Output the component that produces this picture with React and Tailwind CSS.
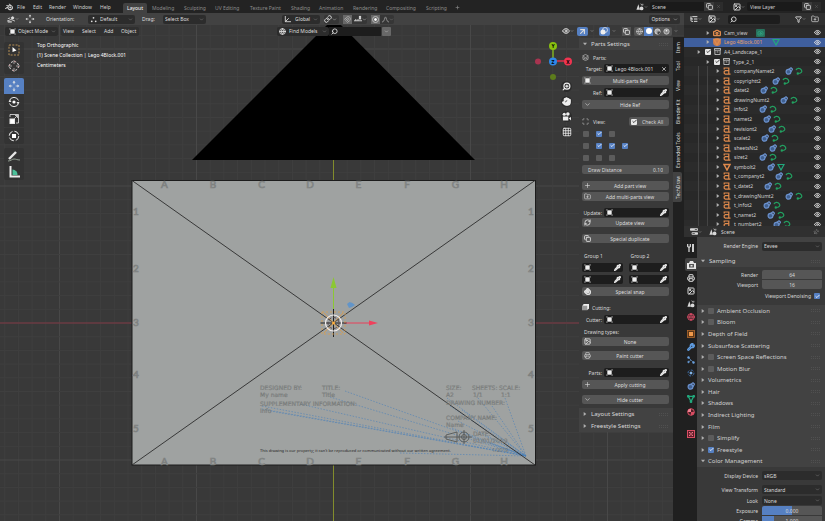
import {
  ArrowUpRight, Camera, Check, ChevronDown, Copy, Eye, Filter, FolderPlus, Globe,
  Grid3x3, Hand, Image, Layers, Link, ListTree, Magnet, Pin, Pipette, Plus, Printer, RefreshCw,
  Scan, Search, Wrench, X, ZoomIn,
} from 'lucide-react';
import { SiBlender } from 'react-icons/si';

const workspaces = [
  ['Modeling', 'w-8'], ['Sculpting', 'w-[31px]'], ['UV Editing', 'w-[35px]'], ['Texture Paint', 'w-[41px]'],
  ['Shading', 'w-7'], ['Animation', 'w-[34px]'], ['Rendering', 'w-[33px]'], ['Compositing', 'w-10'], ['Scripting', 'w-[29px]'],
];

const textObjects = [
  'companyNamet2', 'copyrightt2', 'datet2', 'drawingNumt2', 'infot2', 'namet2', 'revisiont2', 'scalet2',
  'sheetsNt2', 'sizet2', 'symbolt2', 't_companyt2', 't_datet2', 't_drawingNumt2', 't_infot2', 't_namet2', 't_numbert2',
];

const renderPanels = [
  { name: 'Ambient Occlusion', check: true },
  { name: 'Bloom', check: true },
  { name: 'Depth of Field' },
  { name: 'Subsurface Scattering' },
  { name: 'Screen Space Reflections', check: true },
  { name: 'Motion Blur', check: true },
  { name: 'Volumetrics' },
  { name: 'Hair' },
  { name: 'Shadows' },
  { name: 'Indirect Lighting' },
  { name: 'Film' },
  { name: 'Simplify', check: true },
  { name: 'Freestyle', check: true, on: true },
  { name: 'Color Management', open: true },
];

const Tri = ({ open }) => (
  <svg viewBox="0 0 6 6" className="w-1 h-1 shrink-0" fill="#b0b0b0">
    <path d={open ? 'M0 1h6L3 5z' : 'M1 0v6l4-3z'} />
  </svg>
);

const Grip = () => (
  <svg viewBox="0 0 10 3" className="w-[10px] h-[3px] ml-auto shrink-0" stroke="#505050" strokeWidth="1" strokeDasharray="1 1">
    <path d="M0 .5h10M0 2.5h10" />
  </svg>
);

const ObjectIcon = ({ className = '' }) => (
  <svg viewBox="0 0 8 8" className={`w-[7px] h-[7px] shrink-0 ${className}`}>
    <rect x="1.5" y="1.5" width="5" height="5" fill="#f0f0f0" />
    <path d="M.5 2V.5H2M6 .5h1.500V2M7.500 6v1.500H6M2 7.500H.5V6" fill="none" stroke="#999" strokeWidth=".7" />
  </svg>
);

const SceneIcon = ({ className = '' }) => (
  <svg viewBox="0 0 10 10" className={`w-2 h-2 shrink-0 ${className}`} fill="#d8d8d8">
    <path d="M3 1.500L.5 8.500H5z" />
    <circle cx="7" cy="6.800" r="2.300" />
    <path d="M6 .8l1.500 2.400M8.500 1v2" stroke="#d8d8d8" />
  </svg>
);

const EditorIcon = () => (
  <svg viewBox="0 0 10 8" className="w-2 h-[7px] shrink-0" fill="#d8d8d8">
    <rect width="10" height="3" rx="1" />
    <rect x="2" y="5" width="8" height="3" rx="1" />
    <rect x="6" y="1" width="3" height="1" fill="#444" />
    <rect x="3" y="6" width="3" height="1" fill="#444" />
  </svg>
);

const MoveIcon = ({ className = '' }) => (
  <svg viewBox="0 0 16 16" className={`shrink-0 ${className}`} fill="#e6e6e6" stroke="#e6e6e6">
    <path d="M8 .8l2 2.700H6zM8 15.200l2-2.700H6zM.8 8l2.700-2v4zM15.200 8l-2.700-2v4z" stroke="none" />
    <path d="M8 3v2.700M8 10.300V13M3 8h2.700M10.300 8H13" />
  </svg>
);

const Tick = ({ label, on, light }) => (
  <span className="grid shrink-0 place-items-center">
    <input
      type="checkbox" aria-label={label} defaultChecked={on}
      className={`peer [grid-area:1/1] appearance-none w-[6px] h-[6px] rounded-[1px] bg-[#5c5c5c] ${light ? 'checked:bg-[#e8e8e8]' : 'checked:bg-[#5680c2]'}`}
    />
    <Check className={`[grid-area:1/1] w-[5px] h-[5px] pointer-events-none invisible peer-checked:visible ${light ? 'text-[#222]' : 'text-white'}`} strokeWidth={4} />
  </span>
);

const Select = ({ label, value, className = '', icon }) => (
  <span className={`flex items-center h-[9px] rounded-[2px] bg-[#2c2c2c] px-[2px] ${className}`}>
    {icon}
    <select aria-label={label} className="appearance-none min-w-0 flex-1 bg-transparent outline-none">
      <option>{value}</option>
    </select>
    <ChevronDown className="w-[5px] h-[5px] shrink-0 text-[#999]" />
  </span>
);

const PanelButton = ({ icon, children, className = '' }) => (
  <button className={`grid grid-cols-[9px_1fr] items-center w-full h-[9px] rounded-[2px] bg-[#565656] px-[2px] text-[#dedede] ${className}`}>
    {icon ?? <span />}
    <span>{children}</span>
  </button>
);

const FieldBox = ({ label, value = '' }) => (
  <span className="flex flex-1 min-w-0 items-center gap-[2px] h-[9px] rounded-[2px] bg-[#1d1d1d] px-[2px]">
    <ObjectIcon />
    <input aria-label={label} defaultValue={value} className="flex-1 w-0 min-w-0 bg-transparent outline-none" />
    {value ? <X className="w-[6px] h-[6px] shrink-0" strokeWidth={3} /> : <Pipette className="w-[7px] h-[7px] shrink-0 text-[#e6e6e6]" strokeWidth={4} />}
  </span>
);

const ObjectField = ({ label, value, className = '' }) => (
  <label className={`flex items-center h-[9px] min-w-0 ${className}`}>
    <span className="w-[22px] shrink-0 pr-[2px] text-right">{label}</span>
    <FieldBox label={label} value={value} />
  </label>
);

function TopBar() {
  return (
    <header className="flex items-center h-[13px] shrink-0 bg-[#232323] text-[#d0d0d0]">
      <nav className="flex items-center pl-[5px]">
        <SiBlender className="w-2 h-2 mr-1" />
        <button className="w-4 text-left">File</button>
        <button className="w-4 text-left">Edit</button>
        <button className="w-6 text-left">Render</button>
        <button className="w-[27px] text-left">Window</button>
        <button className="w-[23px] text-left">Help</button>
      </nav>
      <nav className="flex items-center self-end h-[11px] text-[#8c8c8c]">
        <button className="w-6 h-[10px] mr-[5px] rounded-t-[2px] bg-[#424242] text-white">Layout</button>
        {workspaces.map(([name, width]) => (
          <button key={name} className={`${width} text-left whitespace-nowrap`}>{name}</button>
        ))}
        <button aria-label="Add workspace"><Plus className="w-[5px] h-[5px]" strokeWidth={3} /></button>
      </nav>
      <div className="flex items-center ml-auto pr-1">
        <SceneIcon />
        <ChevronDown className="w-1 h-1 mr-[2px]" />
        <input aria-label="Scene" defaultValue="Scene" className="w-[54px] h-[9px] rounded-l-[2px] bg-[#1a1a1a] px-[2px] outline-none" />
        <button aria-label="New scene" className="flex items-center justify-center w-[10px] h-[9px] bg-[#3a3a3a]"><Copy className="w-[7px] h-[7px]" strokeWidth={3} /></button>
        <button aria-label="Unlink scene" className="flex items-center justify-center w-[9px] h-[9px] bg-[#2c2c2c] text-[#666]"><X className="w-[5px] h-[5px]" /></button>
        <Image className="w-2 h-2 ml-[10px]" strokeWidth={3} />
        <ChevronDown className="w-1 h-1 mr-[2px]" />
        <input aria-label="View layer" defaultValue="View Layer" className="w-[55px] h-[9px] rounded-l-[2px] bg-[#1a1a1a] px-[3px] outline-none" />
        <button aria-label="New view layer" className="flex items-center justify-center w-[10px] h-[9px] bg-[#3a3a3a]"><Copy className="w-[7px] h-[7px]" strokeWidth={3} /></button>
        <button aria-label="Remove view layer" className="flex items-center justify-center w-[9px] h-[9px] bg-[#2c2c2c] text-[#666]"><X className="w-[5px] h-[5px]" /></button>
      </div>
    </header>
  );
}

function ToolSettings() {
  return (
    <div className="grid grid-cols-[1fr_auto_1fr] items-center h-3 shrink-0 bg-[#424242]">
      <div className="flex items-center pl-[7px] whitespace-nowrap">
        <svg viewBox="0 0 10 8" className="w-2 h-[7px]" fill="none" stroke="#ddd"><path d="M0 6l5-2 5 2M1 3l3-1" /><circle cx="7" cy="2" r="1.500" fill="#ddd" /><path d="M1 7h5" strokeWidth="1.500" /></svg>
        <ChevronDown className="w-1 h-1 mr-[6px]" />
        <MoveIcon className="w-[10px] h-[10px] mr-[11px]" />
        <span className="w-[42px]">Orientation:</span>
        <Select label="Orientation" value="Default" className="w-[47px] mr-[7px]" icon={<svg viewBox="0 0 8 8" className="w-[7px] h-[7px] mr-[3px]" fill="#ddd"><circle cx="2" cy="6" r="1" /><circle cx="4" cy="2" r="1" /><circle cx="6.500" cy="6" r="1" /></svg>} />
        <span className="w-[21px]">Drag:</span>
        <Select label="Drag" value="Select Box" className="w-[43px]" />
      </div>
      <div className="flex items-center gap-1 pl-1 mr-3">
        <Select
          label="Transform orientation" value="Global" className="w-[38px]"
          icon={<svg viewBox="0 0 8 8" className="w-[7px] h-[7px] mr-1" fill="none" stroke="#ddd"><path d="M1.500 0v6.500H8M1.500 6.500l4-4" /></svg>}
        />
        <span className="flex items-center w-[15px] h-[9px] rounded-[2px] bg-[#363636]"><Link className="w-2 h-2" strokeWidth={3} /><ChevronDown className="w-[5px] h-[5px]" /></span>
        <span className="flex items-center h-[9px] rounded-[2px] bg-[#363636]">
          <Magnet className="w-[9px] h-[9px] p-[1px] bg-[#686868] text-[#aaa]" strokeWidth={3} />
          <svg viewBox="0 0 9 8" className="w-2 h-2 ml-[2px]" stroke="#ddd" fill="#ddd"><path d="M0 6h9M2 4v2M4.500 4v2" /><rect x="6" y="1" width="1.500" height="3" /></svg>
          <ChevronDown className="w-[5px] h-[5px]" />
        </span>
        <span className="flex items-center h-[9px] rounded-[2px] bg-[#363636]">
          <svg viewBox="0 0 9 9" className="w-[9px] h-[9px] bg-[#686868]" fill="none" stroke="#bbb"><circle cx="4.500" cy="4.500" r="3" /><circle cx="4.500" cy="4.500" r="1" fill="#fff" stroke="#fff" /></svg>
          <svg viewBox="0 0 8 8" className="w-[7px] h-[7px] ml-[2px]" stroke="#999" fill="none"><path d="M0 7C3 7 3 1 4 1s1 6 4 6" /></svg>
          <ChevronDown className="w-[5px] h-[5px] text-[#888]" />
        </span>
      </div>
      <button className="flex items-center justify-self-end gap-[3px] h-[9px] mr-1 rounded-[2px] bg-[#303030] px-[2px]">
        Options <ChevronDown className="w-[5px] h-[5px]" />
      </button>
    </div>
  );
}

function ViewportHeader() {
  return (
    <div className="grid grid-cols-[1fr_auto_1fr] items-center h-3 shrink-0">
      <div className="flex items-center pl-[5px]">
        <Select label="Mode" value="Object Mode" className="w-[53px] mr-[3px]" icon={<ObjectIcon className="mx-[2px]" />} />
        <nav className="flex items-center h-[9px] rounded-[2px] bg-[#303030] px-[2px]">
          <button className="w-[19px] text-left">View</button>
          <button className="w-[22px] text-left">Select</button>
          <button className="w-[17px] text-left">Add</button>
          <button className="w-4 text-left">Object</button>
        </nav>
      </div>
      <div className="flex items-center mr-4">
        <Select label="Asset type" value="Find Models" className="w-[52px]" icon={<Globe className="w-[7px] h-[7px] mr-[3px]" strokeWidth={3} />} />
        <label className="flex items-center w-[52px] h-[9px] bg-[#1d1d1d] pl-[2px]">
          <Search className="w-[7px] h-[7px] shrink-0 -scale-x-100" strokeWidth={3} />
          <input aria-label="Search models" className="w-full min-w-0 bg-transparent outline-none" />
        </label>
        <button aria-label="Search options" className="flex items-center justify-center w-[9px] h-[9px] ml-[1px] rounded-[1px] bg-[#686868]"><ChevronDown className="w-[5px] h-[5px]" /></button>
      </div>
      <div className="flex items-center justify-end pr-[6px]">
        <Eye className="w-2 h-2" strokeWidth={3} /><ChevronDown className="w-1 h-1 mr-[3px]" />
        <button aria-label="Gizmos" className="w-[11px] h-[9px] rounded-[2px] bg-[#5680c2] px-[1px]"><ArrowUpRight className="w-[9px] h-[9px]" strokeWidth={3} /></button>
        <ChevronDown className="w-1 h-1 ml-[2px] mr-[5px]" />
        <button aria-label="Overlays" className="w-[11px] h-[9px] rounded-[2px] bg-[#5680c2] px-[1px]"><svg viewBox="0 0 8 8" className="w-2 h-2" fill="#eee"><circle cx="3" cy="5" r="2.500" /><circle cx="5" cy="3" r="2.500" fill="none" stroke="#eee" strokeWidth=".7" /></svg></button>
        <ChevronDown className="w-1 h-1 ml-[2px] mr-[6px]" />
        <Copy className="w-[9px] h-[9px] mr-[3px] p-[1px] bg-[#545454]" strokeWidth={3} />
        <div className="flex items-center h-[9px] rounded-[2px] bg-[#545454] px-[1px]">
          <button aria-label="Wireframe" className="flex justify-center w-[9px]"><Globe className="w-[7px] h-[7px]" /></button>
          <button aria-label="Solid" className="flex items-center justify-center w-[9px] h-[9px] bg-[#5680c2]"><span className="block w-[6px] h-[6px] rounded-full bg-white" /></button>
          <button aria-label="Material preview" className="flex justify-center w-[9px]"><svg viewBox="0 0 8 8" className="w-[7px] h-[7px]"><circle cx="4" cy="4" r="3" fill="#aaa" stroke="#ddd" /><path d="M4 4h3a3 3 0 0 1-3 3z" fill="#444" /></svg></button>
          <button aria-label="Rendered" className="flex justify-center w-[9px]"><svg viewBox="0 0 8 8" className="w-[7px] h-[7px]"><circle cx="4" cy="4" r="3" fill="#888" stroke="#ccc" /><circle cx="4" cy="3" r="1" fill="#eee" /></svg></button>
        </div>
        <ChevronDown className="w-1 h-1 ml-[2px]" />
      </div>
    </div>
  );
}

const gridSteps = Array.from({ length: 61 }, (_, i) => i - 30);
const linkEnds = [
  [270, 411], [262, 406], [300, 404], [330, 397], [345, 391], [447, 398], [450, 406], [462, 410],
  [478, 398], [492, 406], [505, 398], [458, 421], [452, 428], [470, 437], [485, 436], [490, 443], [400, 453], [262, 409],
];
const titleBlock = [
  [260, 390, 'DESIGNED BY:'], [322, 390, 'TITLE:'], [260, 397, 'My name'], [322, 397, 'Title'],
  [260, 406, 'SUPPLEMENTARY INFORMATION:'], [260, 413, 'Info'],
  [446, 390, 'SIZE:'], [472, 390, 'SHEETS:'], [499, 390, 'SCALE:'], [446, 397, 'A2'], [473, 397, '1/1'], [501, 397, '1:1'],
  [446, 405, 'DRAWING NUMBER:'], [446, 420, 'COMPANY NAME:'], [446, 427, 'Name'], [473, 436, 'DATE:'], [473, 443, '01/01/2019'],
];
const rowNumbers = [[1, 215], [2, 272], [3, 326], [4, 378], [5, 432]];

function SceneCanvas() {
  return (
    <svg viewBox="0 25 684 496" preserveAspectRatio="xMidYMid slice" className="absolute inset-0 w-full h-full" fontFamily="Noto Sans, sans-serif">
      <rect y="25" width="684" height="496" fill="#393939" />
      {gridSteps.map((i) => (
        <g key={i} stroke={i % 10 === 0 ? '#484848' : '#3f3f3f'} strokeWidth="1">
          <path d={`M${333.5 + i * 13.7} 25V521`} />
          <path d={`M0 ${323 + i * 13.7}H684`} />
        </g>
      ))}
      <path d="M0 323H684" stroke="#7c3540" />
      <rect x="333" y="25" width="1" height="496" fill="#828c2c" />
      <path d="M192 160L334 18L475 160z" fill="#000" />
      <rect x="132" y="180.500" width="403.500" height="284.500" fill="#9fa2a1" stroke="#1c1c1c" />
      <g fontSize="10" fontFamily="Lato, sans-serif" fill="#959897" stroke="#7e8180" strokeWidth=".7" textAnchor="middle">
        {['A', 'B', 'C', 'D', 'E', 'F', 'G', 'H'].map((c, i) => (
          <g key={c}>
            <text x={164.500 + i * 48.500} y="188">{c}</text>
            <text x={164.500 + i * 48.500} y="465">{c}</text>
          </g>
        ))}
        {rowNumbers.map(([n, y]) => (
          <g key={n}>
            <text x="136" y={y}>{n}</text>
            <text x="531" y={y}>{n}</text>
          </g>
        ))}
      </g>
      <g stroke="#4a7fb8" strokeWidth=".6" strokeDasharray="1.500 1.500">
        {linkEnds.map(([x, y]) => <path key={`${x}-${y}`} d={`M${x} ${y}L526 456`} />)}
      </g>
      <path d="M132 180.500L535 465M535 180.500L132 465" stroke="#2c2c2c" strokeWidth=".9" />
      <g fontSize="6" fontFamily="DejaVu Sans, sans-serif" fill="#858887" stroke="#707372" strokeWidth=".2">
        {titleBlock.map(([x, y, t]) => <text key={t} x={x} y={y}>{t}</text>)}
      </g>
      <text x="260" y="452" fontSize="4" fill="#1f1f1f">This drawing is our property; it can't be reproduced or communicated without our written agreement.</text>
      <text x="492" y="452" fontSize="5" fill="#6f7574">1/2019</text>
      <g fill="none" stroke="#555857" strokeWidth=".9">
        <path d="M446 435l11-3v10l-11-3zM444 437h28M464 430v14" />
        <circle cx="464" cy="437" r="5" />
        <circle cx="464" cy="437" r="2.500" />
      </g>
      <g fill="none">
        <rect x="333" y="288" width="1" height="24" fill="#8bc832" />
        <path d="M333.500 277l3 11h-6z" fill="#8bc832" />
        <path d="M344 323h26" stroke="#e8405a" />
        <path d="M378 323l-9 -2.500v5z" fill="#f0405c" />
        <path d="M347 304l2.500-2 3 1 2.500 2-3 2-3 1z" fill="#4a90d8" opacity=".7" />
        <path d="M324 313l19 20M343 313l-19 20" stroke="#e09a40" strokeWidth=".8" />
        <path d="M320.500 323h26M333.500 309v28" stroke="#222" />
        <rect x="322" y="312" width="23" height="22" stroke="#dca04c" strokeWidth=".8" strokeDasharray="2 2" />
        <circle cx="333.500" cy="323" r="8" stroke="#f4eeee" strokeWidth="1.200" />
        <circle cx="333.500" cy="323" r="5.500" stroke="#5a4a50" strokeDasharray="3 2" />
        <circle cx="333.500" cy="323" r="1.500" fill="#ffb040" />
      </g>
    </svg>
  );
}

const toolButton = 'flex items-center justify-center w-5 h-4 bg-[#303030]/70';

function Toolbar() {
  return (
    <div className="flex flex-col w-6 shrink-0 pl-1 pt-[5px]">
      <button aria-label="Tweak" className={`${toolButton} rounded-t-[2px]`}>
        <svg viewBox="0 0 12 12" className="w-3 h-3"><rect x="1" y="1" width="10" height="10" fill="none" stroke="#d8a860" strokeDasharray="2 1.300" strokeWidth=".8" /><path d="M4.500 3l4 3.500-4 1.500z" fill="#fff" /></svg>
      </button>
      <button aria-label="Cursor" className={`${toolButton} rounded-b-[2px]`}>
        <svg viewBox="0 0 12 12" className="w-3 h-3" fill="none"><circle cx="6" cy="6" r="4.500" stroke="#e8e8e8" strokeDasharray="2 1.500" /><circle cx="6" cy="6" r="4.500" stroke="#c05050" strokeDasharray="1 6" /><path d="M6 0v4M6 8v4M0 6h4M8 6h4" stroke="#ccc" strokeWidth=".7" /></svg>
      </button>
      <button aria-label="Move" className="flex items-center justify-center w-5 h-4 mt-1 rounded-t-[2px] bg-[#5680c2]"><MoveIcon className="w-3 h-3" /></button>
      <button aria-label="Rotate" className={toolButton}>
        <svg viewBox="0 0 12 12" className="w-3 h-3" fill="none" stroke="#e6e6e6"><path d="M1.500 4.500a4.800 4.800 0 0 1 9 0M10.500 7.500a4.800 4.800 0 0 1-9 0" /><path d="M.5 6l1.500-2.500L3.500 6zM11.500 6L10 8.500 8.500 6z" fill="#e6e6e6" stroke="none" /><circle cx="6" cy="6" r="1.600" fill="#fff" stroke="none" /></svg>
      </button>
      <button aria-label="Scale" className={`${toolButton} mt-[1px]`}>
        <svg viewBox="0 0 12 12" className="w-3 h-3" fill="none" stroke="#e6e6e6"><rect x="2" y="6" width="4.500" height="4.500" fill="#fff" /><path d="M2 4V1.500h8.500V10H8M6.500 5.500l3-3M7 2.500h2.500V5" strokeWidth=".8" /></svg>
      </button>
      <button aria-label="Transform" className={`${toolButton} mt-[1px] rounded-b-[2px]`}>
        <svg viewBox="0 0 12 12" className="w-3 h-3" fill="none" stroke="#e6e6e6"><circle cx="6" cy="6" r="4.800" strokeDasharray="5.500 2" /><rect x="4" y="4" width="4" height="4" fill="#fff" stroke="none" /></svg>
      </button>
      <button aria-label="Annotate" className={`${toolButton} mt-1 rounded-t-[2px]`}>
        <svg viewBox="0 0 14 12" className="w-[14px] h-3" fill="none" stroke="#e6e6e6"><path d="M2 9L9 2" strokeWidth="2.400" /><path d="M1 11c3 0 4-2 6-2s3 1 6 1" stroke="#a8b8a8" strokeWidth=".8" /></svg>
      </button>
      <button aria-label="Measure" className={`${toolButton} rounded-b-[2px]`}>
        <svg viewBox="0 0 12 12" className="w-3 h-3"><path d="M2.500 0v10.500H12" fill="none" stroke="#eee" strokeWidth="2" /><path d="M4.500 3.500a5 5 0 0 1 5 5.500h-5z" fill="#4cc09a" /></svg>
      </button>
    </div>
  );
}

function NavGizmo() {
  const round = 'flex items-center justify-center w-[11px] h-[11px] rounded-full bg-[#2c2c2c] text-[#eee]';
  return (
    <div className="flex flex-col items-end w-10 shrink-0 mr-[6px] pt-1">
      <svg viewBox="0 0 40 40" className="w-10 h-10" fontSize="5" fontWeight="700" textAnchor="middle">
        <path d="M20 20V6" stroke="#80b020" strokeWidth="1.500" />
        <path d="M20 20h14" stroke="#e0304c" strokeWidth="1.500" />
        <circle cx="5" cy="20.500" r="3" fill="#a83450" />
        <circle cx="20" cy="36" r="3" fill="#5d7c1c" />
        <circle cx="20" cy="5" r="4" fill="#8ac010" />
        <circle cx="20" cy="20.500" r="4" fill="#2e88e8" />
        <circle cx="35" cy="20.500" r="4" fill="#f03450" />
        <text x="20" y="7">Y</text><text x="20" y="22.500">Z</text><text x="35" y="22.500">X</text>
      </svg>
      <div className="flex flex-col gap-1 pr-[1px]">
        <button aria-label="Zoom" className={round}><ZoomIn className="w-[9px] h-[9px] -scale-x-100" strokeWidth={3} /></button>
        <button aria-label="Pan" className={round}><Hand className="w-[9px] h-[9px]" fill="#eee" strokeWidth={3} /></button>
        <button aria-label="Camera view" className={round}>
          <svg viewBox="0 0 10 10" className="w-[9px] h-[9px]" fill="#eee"><circle cx="2.500" cy="2.500" r="1.800" /><circle cx="6.500" cy="2.300" r="2" /><path d="M1 5h6v4.500H1zM7.500 7L10 5.500v4z" /></svg>
        </button>
        <button aria-label="Perspective" className={round}><Grid3x3 className="w-[10px] h-[10px]" strokeWidth={2} /></button>
      </div>
    </div>
  );
}

const viewChecks = [
  [false, true, false],
  [false, true, true, true],
  [false, false, false],
];
const glyph = 'w-[7px] h-[7px] shrink-0';

function PartsPanel() {
  return (
    <aside className="w-[94px] shrink-0 pt-[1px] text-[#d8d8d8]">
      <section className="bg-[#393939]">
        <h2 className="flex items-center gap-1 h-3 bg-[#424242] px-1">
          <Tri open /><span className="text-[6px]">Parts Settings</span><Grip />
        </h2>
        <div className="flex flex-col pl-[3px] pr-1 pt-[3px] pb-1">
          <p className="flex items-center gap-1 h-[9px] mb-[2px]"><Layers className={glyph} />Parts:</p>
          <div className="flex flex-col gap-[3px]">
            <ObjectField label="Target:" value="Lego 4Block.001" />
            <PanelButton icon={<ObjectIcon />}>Multi-parts Ref</PanelButton>
            <ObjectField label="Ref:" />
            <PanelButton icon={<ChevronDown className={glyph} />}>Hide Ref</PanelButton>
          </div>
          <div className="flex flex-col gap-[3px] mt-2">
            <div className="flex items-center justify-between h-[9px]">
              <span className="flex items-center gap-1"><Scan className={glyph} />View:</span>
              <label className="flex items-center gap-[5px] w-10 h-[9px] rounded-[2px] bg-[#565656] pl-[2px]"><Tick label="Check All" on light />Check All</label>
            </div>
            {viewChecks.map((row, r) => (
              <div key={r} className="flex items-center gap-[7px] h-[9px] pl-[1px]">
                {row.map((on, c) => <Tick key={c} label={`View ${r + 1}-${c + 1}`} on={on} />)}
              </div>
            ))}
            <label className="flex items-center h-[9px] rounded-[2px] bg-[#565656] px-[6px]">
              Draw Distance
              <input defaultValue="0.10" className="flex-1 w-0 bg-transparent text-right outline-none" />
            </label>
          </div>
          <PanelButton className="mt-[7px] mb-[2px]" icon={<Plus className={glyph} />}>Add part view</PanelButton>
          <PanelButton icon={<FolderPlus className={glyph} />}>Add multi-parts view</PanelButton>
          <ObjectField className="mt-[7px] mb-[1px]" label="Update:" />
          <PanelButton icon={<RefreshCw className={glyph} strokeWidth={3} />}>Update view</PanelButton>
          <PanelButton className="mt-[7px]" icon={<Copy className={glyph} strokeWidth={3} />}>Special duplicate</PanelButton>
          <div className="grid grid-cols-2 gap-x-[6px] gap-y-[3px] mt-2 mb-[3px]">
            <span className="flex items-center h-[9px] pl-[2px]">Group 1</span>
            <span className="flex items-center h-[9px] pl-[2px]">Group 2</span>
            <FieldBox label="Group 1 first" />
            <FieldBox label="Group 2 first" />
            <FieldBox label="Group 1 second" />
            <FieldBox label="Group 2 second" />
          </div>
          <PanelButton icon={<Magnet className={`${glyph} rotate-90`} strokeWidth={5} />}>Special snap</PanelButton>
          <div className="flex flex-col gap-[3px] mt-[7px]">
            <p className="flex items-center gap-[3px] h-[9px]">
              <svg viewBox="0 0 8 8" className={glyph}><path d="M0 2l2-2h6v5L6 7H0z" fill="#999" /><path d="M2 0h6v5L6 6.500V2H1z" fill="#eee" /></svg>Cutting:
            </p>
            <ObjectField label="Cutter:" />
            <p className="flex items-center h-[9px] pl-[2px]">Drawing types:</p>
          </div>
          <PanelButton className="mt-[1px]" icon={<Image className={glyph} strokeWidth={3} />}>None</PanelButton>
          <PanelButton className="mt-[5px]" icon={<Printer className={glyph} />}>Paint cutter</PanelButton>
          <ObjectField className="mt-2 mb-[3px]" label="Parts:" />
          <PanelButton icon={<Plus className={glyph} />}>Apply cutting</PanelButton>
          <PanelButton className="mt-[6px]" icon={<ChevronDown className={glyph} />}>Hide cutter</PanelButton>
        </div>
      </section>
      <h2 className="flex items-center gap-1 h-3 bg-[#424242] px-1 text-[6px]"><Tri />Layout Settings<Grip /></h2>
      <h2 className="flex items-center gap-1 h-3 bg-[#424242] px-1 text-[6px]"><Tri />Freestyle Settings<Grip /></h2>
    </aside>
  );
}

const sideTabs = [
  ['Item', 'h-[19px]'], ['Tool', 'h-[19px]'], ['View', 'h-5'], ['BlenderKit', 'h-8'], ['Extended Tools', 'h-11'],
];

function SideTabs() {
  return (
    <div className="flex flex-col w-[11px] shrink-0 bg-[#202020] pt-[1px]">
      {sideTabs.map(([name, height]) => (
        <button key={name} className={`${height} w-[9px] shrink-0 flex items-center justify-center rotate-180 [writing-mode:vertical-rl] whitespace-nowrap`}>{name}</button>
      ))}
      <button className="flex shrink-0 items-center justify-center w-[9px] h-[30px] rotate-180 rounded-l-[2px] bg-[#424242] [writing-mode:vertical-rl]">TechDraw</button>
    </div>
  );
}

function TypeIcon({ mesh }) {
  if (mesh) return <svg viewBox="0 0 8 8" className="w-2 h-2 shrink-0" fill="none" stroke="#e08a4c" strokeWidth="1.500"><path d="M1 1.500h6L4 7z" /></svg>;
  return <svg viewBox="0 0 8 8" className="w-2 h-2 shrink-0" fill="none" stroke="#e08a4c" strokeWidth="1.200"><path d="M1.200 2.500V1h4.600v6.200M5.800 3.700H2.300L1.200 4.600v1.600l1.100 1h5.200" /></svg>;
}

const MeshData = () => <svg viewBox="0 0 8 8" className="w-2 h-2 shrink-0" fill="none" stroke="#22a87c" strokeWidth="1.200"><path d="M1 1.500h6L4 7z" /></svg>;
const CurveData = () => <svg viewBox="0 0 8 8" className="w-2 h-2 shrink-0" fill="none" stroke="#22a060" strokeWidth="1.200"><path d="M1 3.200C1.500 1 5 .8 6.300 2.800S6 6.500 3 6.500" /><circle cx="2.800" cy="6.500" r=".6" /></svg>;
const ConstraintIcon = () => <svg viewBox="0 0 8 8" className="w-2 h-2 shrink-0" fill="none" stroke="#6a90cc" strokeWidth="1.200"><circle cx="3.500" cy="4.800" r="2.400" fill="#40608f" /><path d="M3.500 2.500L6 .8l1.500 1.400-1.500 2.500" /></svg>;
const Collection = () => <svg viewBox="0 0 8 8" className="w-[7px] h-[7px] shrink-0" fill="none" stroke="#ddd"><path d="M.5 .5h7v2h-7zM1 2.500v5h6v-5M3 4.500h2" strokeWidth=".9" /></svg>;
const EyeToggle = () => <button aria-label="Toggle visibility" className="ml-auto"><Eye className="w-[7px] h-[7px] text-[#e0e0e0]" strokeWidth={3} /></button>;

function Outliner() {
  const row = 'flex flex-1 items-center min-h-0 pr-1 odd:bg-[#2b2b2b]';
  return (
    <section className="flex flex-col h-[213px] shrink-0 bg-[#282828]">
      <div className="flex items-center h-3 shrink-0 bg-[#303030] px-[6px]">
        <ListTree className="w-2 h-2" strokeWidth={3} /><ChevronDown className="w-1 h-1 mr-[6px]" />
        <Image className="w-2 h-2" strokeWidth={3} /><ChevronDown className="w-1 h-1" />
        <label className="flex items-center w-[52px] h-[9px] ml-2 rounded-[2px] bg-[#1d1d1d] pl-[2px]">
          <Search className="w-[7px] h-[7px] shrink-0 -scale-x-100" strokeWidth={3} />
          <input aria-label="Filter outliner" className="w-full min-w-0 bg-transparent outline-none" />
        </label>
        <Filter className="w-[7px] h-[7px] ml-auto" strokeWidth={3} /><ChevronDown className="w-1 h-1 mr-[5px]" />
        <FolderPlus className="w-2 h-2" />
      </div>
      <div className="flex-1 min-h-0 overflow-hidden pt-[3px]">
        <ul className="flex flex-col h-[201px] text-[#cfcfcf]">
          <li className={`${row} pl-[22px]`}>
            <Tri /><Camera className="w-2 h-2 mx-[3px] text-[#e08a4c]" strokeWidth={4} />Cam_view
            <Camera className="w-[9px] h-2 ml-[9px] rounded-[1px] bg-[#28705c] p-[1px] text-[#3ac49a]" /><EyeToggle />
          </li>
          <li className="flex flex-1 items-center min-h-0 pl-[22px] pr-1 bg-[#3f5f9e] text-[#e9a26a]">
            <Tri /><span className="flex w-2 h-2 mx-[3px] items-center justify-center rounded-full bg-[#c87c50]"><TypeIcon mesh /></span>Lego 4Block.001
            <span className="ml-[10px]"><MeshData /></span><EyeToggle />
          </li>
          <li className={`${row} pl-[13px] gap-[3px]`}><Tri /><span className="ml-[1px]"><Tick label="A4_Landscape_1" on light /></span><Collection />A4_Landscape_1<EyeToggle /></li>
          <li className={`${row} pl-[22px] gap-[3px]`}><Tri /><span className="ml-[1px]"><Tick label="Type_2_1" on light /></span><Collection />Type_2_1<EyeToggle /></li>
          {textObjects.map((name) => (
            <li key={name} className={`${row} pl-[14px]`}>
              <span className="self-stretch w-[10px] border-x border-[#444]" />
              <span className="w-2" />
              <span className="flex items-center w-[7px]"><Tri /></span>
              <TypeIcon mesh={name === 'symbolt2'} />
              <span className="ml-[3px] mr-[11px]">{name}</span>
              <ConstraintIcon /><span className="w-[2px]" />
              {name === 'symbolt2' ? <MeshData /> : <CurveData />}
              <EyeToggle />
            </li>
          ))}
        </ul>
      </div>
    </section>
  );
}

function PropertyTabs() {
  const tab = 'flex items-center justify-center w-3 h-[13px] shrink-0';
  return (
    <nav className="flex flex-col items-end w-[13px] shrink-0 bg-[#202020] pt-1">
      <button aria-label="Tool" className={`${tab} mb-1`}>
        <svg viewBox="0 0 8 8" className="w-2 h-2" fill="none" stroke="#e0e0e0" strokeWidth="1.500"><path d="M2 3.500V8M.7 0v2.500l1.300 1 1.300-1V0" strokeWidth="1.200" /><path d="M6 0v8" strokeWidth="1.800" /></svg>
      </button>
      <button aria-label="Render" className={`${tab} rounded-l-[2px] bg-[#424242]`}>
        <svg viewBox="0 0 9 8" className="w-[9px] h-2"><path d="M0 2h2l1-2h3l1 2h2v6H0z" fill="#e6e6e6" /><rect x="2" y="3" width="5" height="3.500" fill="#555" /><rect x="3.500" y="4" width="2" height="1.500" fill="#e6e6e6" /></svg>
      </button>
      <button aria-label="Output" className={tab}><Printer className="w-2 h-2" strokeWidth={3} /></button>
      <button aria-label="View layer" className={tab}><Image className="w-2 h-2" strokeWidth={3} /></button>
      <button aria-label="Scene" className={tab}><SceneIcon /></button>
      <button aria-label="World" className={tab}><Globe className="w-2 h-2 text-[#d04a62]" strokeWidth={3} /></button>
      <button aria-label="Object" className={`${tab} mt-1`}>
        <svg viewBox="0 0 8 8" className="w-2 h-2"><rect x=".5" y=".5" width="7" height="7" fill="#5c3818" stroke="#b0682c" strokeWidth=".8" /><rect x="2" y="2" width="4" height="4" fill="#f09a4c" /></svg>
      </button>
      <button aria-label="Modifiers" className={tab}><Wrench className="w-2 h-2 text-[#5f9ce0]" strokeWidth={4} /></button>
      <button aria-label="Particles" className={tab}>
        <svg viewBox="0 0 8 8" className="w-2 h-2" fill="#6aa0dc" stroke="#6aa0dc" strokeWidth=".6"><path d="M1 1l5.500 5.500M1 6.500L4 4" /><circle cx="1.500" cy="1.500" r="1" /><circle cx="6.500" cy="6.500" r="1" /><circle cx="1.500" cy="6" r=".8" /></svg>
      </button>
      <button aria-label="Physics" className={tab}><svg viewBox="0 0 8 8" className="w-2 h-2" fill="none" stroke="#3a6ca8"><circle cx="4" cy="4" r="3" strokeDasharray="3 1.500" /><circle cx="4" cy="4" r="1" fill="#8cc0f4" stroke="#8cc0f4" /></svg></button>
      <button aria-label="Constraints" className={tab}><ConstraintIcon /></button>
      <button aria-label="Mesh data" className={tab}>
        <svg viewBox="0 0 8 8" className="w-2 h-2" fill="none" stroke="#22a87c" strokeWidth="1.300"><path d="M1.300 1.300L4 6.500l2.700-5.200z" /><circle cx="1.300" cy="1.300" r=".7" /><circle cx="6.700" cy="1.300" r=".7" /><circle cx="4" cy="6.700" r=".7" /></svg>
      </button>
      <button aria-label="Material" className={tab}><svg viewBox="0 0 8 8" className="w-2 h-2"><circle cx="4" cy="4" r="3.300" fill="#502028" stroke="#d84c62" /><path d="M4 4V.7a3.300 3.300 0 0 0-3.300 3.300z" fill="#f08090" /><path d="M4 4h3.300A3.300 3.300 0 0 1 4 7.300z" fill="#d84c62" /></svg></button>
      <button aria-label="Texture" className={`${tab} mt-[9px]`}>
        <svg viewBox="0 0 8 8" className="w-2 h-2"><rect x=".5" y=".5" width="7" height="7" fill="#5c1c28" stroke="#d84c62" /><path d="M2 2h1.300v1.300H2zM4.700 2H6v1.300H4.700zM3.300 3.300h1.400v1.400H3.300zM2 4.700h1.300V6H2zM4.700 4.700H6V6H4.700z" fill="#f07888" /></svg>
      </button>
    </nav>
  );
}

const PropRow = ({ label, children, className = '' }) => (
  <label className={`grid grid-cols-[60px_60px] justify-end items-center gap-1 pr-[3px] ${className}`}>
    <span className="text-right">{label}</span>
    {children}
  </label>
);

function Properties() {
  return (
    <section className="flex flex-col flex-1 min-h-0 text-[#d8d8d8]">
      <div className="flex items-center h-[11px] shrink-0 bg-[#303030] px-[6px]">
        <EditorIcon /><ChevronDown className="w-1 h-1 mr-[7px]" /><SceneIcon className="mr-1" />
        <span>Scene</span>
        <Pin className="w-[6px] h-[6px] ml-auto rotate-45 text-[#777]" strokeWidth={3} />
      </div>
      <div className="flex flex-1 min-h-0">
        <PropertyTabs />
        <div className="flex-1 min-w-0 overflow-hidden bg-[#424242]">
          <PropRow label="Render Engine" className="h-[18px]"><Select label="Render Engine" value="Eevee" /></PropRow>
          <h3 className="flex items-center gap-1 h-3 px-1 text-[6px]"><Tri open />Sampling<Grip /></h3>
          <div className="bg-[#393939] pt-[3px] pb-[2px]">
            <PropRow label="Render"><input defaultValue="64" className="h-[9px] w-full rounded-t-[2px] bg-[#565656] text-center outline-none" /></PropRow>
            <PropRow label="Viewport" className="mt-[1px]"><input defaultValue="16" className="h-[9px] w-full rounded-b-[2px] bg-[#565656] text-center outline-none" /></PropRow>
            <label className="flex items-center justify-end gap-[3px] h-[14px] pr-[5px]">Viewport Denoising<Tick label="Viewport Denoising" on /></label>
          </div>
          <div className="flex flex-col h-[162px] text-[6px] text-[#cfcfcf]">
            {renderPanels.map((p) => (
              <h3 key={p.name} className="flex flex-1 items-center gap-[3px] px-1">
                <Tri open={p.open} />
                {p.check && <Tick label={p.name} on={p.on} />}
                {p.name}
                <Grip />
              </h3>
            ))}
          </div>
          <div className="flex flex-col bg-[#393939] pt-1">
            <PropRow label="Display Device"><Select label="Display Device" value="sRGB" /></PropRow>
            <PropRow label="View Transform" className="mt-[5px]"><Select label="View Transform" value="Standard" /></PropRow>
            <PropRow label="Look" className="mt-[2px]"><Select label="Look" value="None" /></PropRow>
            <PropRow label="Exposure" className="mt-[1px]"><input defaultValue="0.000" className="h-[9px] w-full rounded-t-[2px] bg-linear-to-r from-[#5680c2] from-50% to-[#565656] to-50% text-center outline-none" /></PropRow>
            <PropRow label="Gamma" className="mt-[1px]"><input defaultValue="1.000" className="h-[9px] w-full bg-linear-to-r from-[#5680c2] from-20% to-[#565656] to-20% text-center outline-none" /></PropRow>
          </div>
        </div>
      </div>
    </section>
  );
}

export default function App() {
  return (
    <div className="flex flex-col h-screen overflow-hidden bg-[#202020] font-['Noto_Sans',sans-serif] text-[5px] leading-[8px] text-[#dedede]">
      <TopBar />
      <div className="flex flex-1 min-h-0">
        <main className="flex flex-col flex-1 min-w-0">
          <ToolSettings />
          <div className="relative flex-1 min-h-0 overflow-hidden">
            <SceneCanvas />
            <div className="relative flex flex-col h-full">
              <ViewportHeader />
              <div className="flex flex-1 min-h-0">
                <Toolbar />
                <div className="flex-1 pl-[13px] pt-[3px] leading-[10px] text-white">
                  <p>Top Orthographic</p>
                  <p>(1) Scene Collection | Lego 4Block.001</p>
                  <p>Centimeters</p>
                </div>
                <NavGizmo />
                <PartsPanel />
                <SideTabs />
              </div>
            </div>
          </div>
        </main>
        <div className="flex flex-col w-[141px] shrink-0">
          <Outliner />
          <Properties />
        </div>
      </div>
    </div>
  );
}
